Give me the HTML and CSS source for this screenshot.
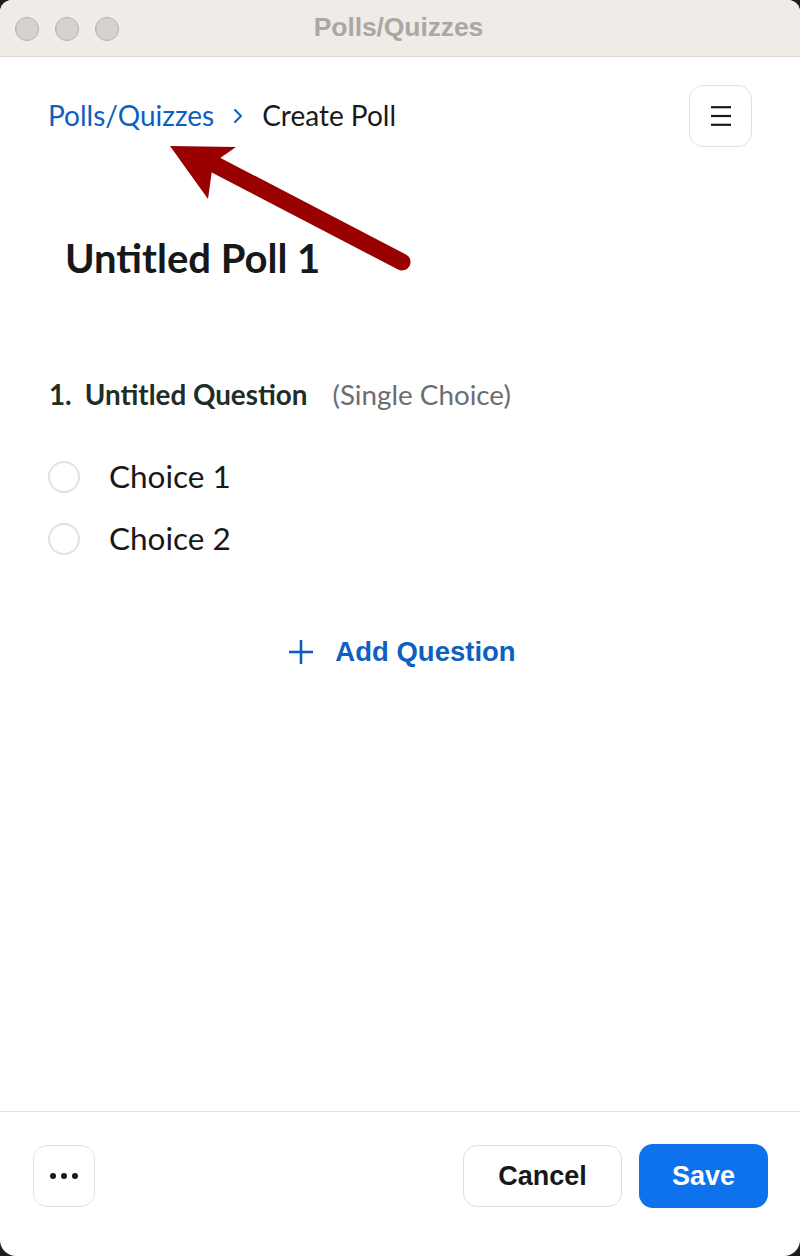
FILE: index.html
```html
<!DOCTYPE html>
<html lang="en">
<head>
<meta charset="utf-8">
<title>Polls/Quizzes</title>
<link rel="stylesheet" href="styles.css">
</head>
<body>
<div class="window">
  <header class="titlebar">
    <div class="lights">
      <span class="light"></span>
      <span class="light"></span>
      <span class="light"></span>
    </div>
    <div class="wintitle">Polls/Quizzes</div>
    <div></div>
  </header>

  <main class="content">
    <div class="topbar">
      <nav class="crumbs">
        <a class="crumb-link">Polls/Quizzes</a>
        <svg class="chev" width="10" height="16" viewBox="0 0 10 16"><polyline points="2,2 8,8 2,14" fill="none" stroke="#0e5fc0" stroke-width="2" stroke-linecap="round" stroke-linejoin="round"/></svg>
        <span class="crumb-current">Create Poll</span>
      </nav>
      <button class="icon-btn menu-btn" aria-label="Menu">
        <svg width="22" height="20" viewBox="0 0 22 20"><g stroke="#1a1a1a" stroke-width="2.2"><line x1="1" y1="1.2" x2="21" y2="1.2"/><line x1="1" y1="10" x2="21" y2="10"/><line x1="1" y1="18.8" x2="21" y2="18.8"/></g></svg>
      </button>
    </div>

    <h1 class="poll-title">Untitled Poll 1</h1>

    <div class="question">
      <span class="q-num">1.</span>
      <span class="q-title">Untitled Question</span>
      <span class="q-type">(Single Choice)</span>
    </div>

    <ul class="choices">
      <li class="choice"><span class="radio"></span><span class="choice-text">Choice 1</span></li>
      <li class="choice"><span class="radio"></span><span class="choice-text">Choice 2</span></li>
    </ul>

    <div class="add-row">
      <button class="add-btn">
        <svg width="26" height="26" viewBox="0 0 26 26"><g stroke="#0e5fc0" stroke-width="2.6"><line x1="13" y1="1" x2="13" y2="25"/><line x1="1" y1="13" x2="25" y2="13"/></g></svg>
        <span>Add Question</span>
      </button>
    </div>
  </main>

  <footer class="footer">
    <button class="icon-btn more-btn" aria-label="More">
      <svg width="30" height="8" viewBox="0 0 30 8"><g fill="#1a1a1a"><circle cx="4" cy="4" r="3"/><circle cx="15" cy="4" r="3"/><circle cx="26" cy="4" r="3"/></g></svg>
    </button>
    <div class="actions">
      <button class="btn btn-cancel">Cancel</button>
      <button class="btn btn-save">Save</button>
    </div>
  </footer>

  <svg class="annotation" width="800" height="1256" viewBox="0 0 800 1256">
    <line x1="402" y1="262" x2="208" y2="161" stroke="#990000" stroke-width="17" stroke-linecap="round"/>
    <polygon points="170,146 236,147 213,163 208,199" fill="#990000"/>
  </svg>
</div>
</body>
</html>
```
FILE: styles.css
```css
* { box-sizing: border-box; }
html, body { margin: 0; padding: 0; }
body {
  background: #1e1e1e;
  width: 800px;
  height: 1256px;
  overflow: hidden;
}
.window {
  position: relative;
  width: 800px;
  height: 1256px;
  background: #ffffff;
  border-radius: 12px 12px 16px 16px;
  overflow: hidden;
  display: flex;
  flex-direction: column;
}
.titlebar {
  height: 57px;
  flex: none;
  background: #efebe7;
  border-bottom: 1px solid #d9d7d5;
  display: grid;
  grid-template-columns: 1fr auto 1fr;
  align-items: center;
}
.lights {
  display: flex;
  gap: 16px;
  padding-left: 15px;
  padding-top: 2px;
}
.light {
  width: 24px;
  height: 24px;
  border-radius: 50%;
  background: #d6d2ce;
  border: 1px solid #b3afab;
}
.wintitle {
  font-family: "Liberation Sans", Arial, sans-serif;
  font-weight: 700;
  font-size: 26.5px;
  color: #aca7a3;
  letter-spacing: -0.1px;
  padding-bottom: 1px;
  margin-left: -3px;
}
.content {
  flex: 1;
  font-family: Lato, "Noto Sans", sans-serif;
}
.topbar {
  margin-top: 28px;
  height: 62px;
  padding: 0 48px 0 49px;
  display: flex;
  align-items: center;
  justify-content: space-between;
}
.crumbs {
  display: flex;
  align-items: center;
  font-size: 28px;
  line-height: 1.2;
  margin-left: -1px;
}
.crumb-link { color: #0e5fc0; }
.chev { margin: 0 19px 0 19px; }
.crumb-current { color: #1a1a1a; }
.icon-btn {
  background: #fff;
  border: 1.5px solid #dde0e4;
  border-radius: 14px;
  display: flex;
  align-items: center;
  justify-content: center;
  padding: 0;
}
.menu-btn { width: 63px; height: 62px; }
.poll-title {
  margin: 88px 0 0 65px;
  font-size: 40px;
  line-height: 46px;
  font-weight: 700;
  color: #17181a;
}
.question {
  margin: 98px 0 0 49px;
  font-size: 27.8px;
  line-height: 32px;
  display: flex;
}
.q-num { font-weight: 700; color: #1f2d27; margin-right: 13px; }
.q-title { font-weight: 700; color: #1f2d27; margin-right: 25px; }
.q-type { color: #6b6d71; }
.choices {
  list-style: none;
  margin: 35px 0 0 48px;
  padding: 0;
}
.choice {
  height: 62px;
  display: flex;
  align-items: center;
}
.radio {
  width: 32px;
  height: 32px;
  border-radius: 50%;
  border: 2px solid #dfe2e6;
  margin-right: 29px;
}
.choice-text {
  font-size: 31.5px;
  line-height: 36px;
  color: #17181a;
  margin-top: -2px;
}
.add-row {
  margin-top: 62px;
  height: 40px;
  display: flex;
  justify-content: center;
}
.add-btn {
  background: none;
  border: none;
  padding: 0;
  margin-left: 4px;
  display: flex;
  align-items: center;
  gap: 21px;
  font-family: "Liberation Sans", Arial, sans-serif;
  font-weight: 700;
  font-size: 27.5px;
  color: #0e5fc0;
}
.footer {
  flex: none;
  height: 145px;
  border-top: 1px solid #dfe1e4;
  padding: 33px 32px 0 33px;
  display: flex;
  justify-content: space-between;
  align-items: flex-start;
}
.more-btn { width: 62px; height: 62px; }
.actions {
  display: flex;
  gap: 17px;
  align-items: center;
  height: 62px;
}
.btn {
  font-family: "Liberation Sans", Arial, sans-serif;
  font-weight: 700;
  font-size: 27px;
  border-radius: 14px;
  padding: 0;
}
.btn-cancel {
  width: 159px;
  height: 62px;
  background: #fff;
  border: 1.5px solid #dde0e4;
  color: #17181a;
}
.btn-save {
  width: 129px;
  height: 64px;
  background: #0e72ed;
  border: none;
  color: #fff;
}
.annotation {
  position: absolute;
  left: 0;
  top: 0;
  pointer-events: none;
}
```
